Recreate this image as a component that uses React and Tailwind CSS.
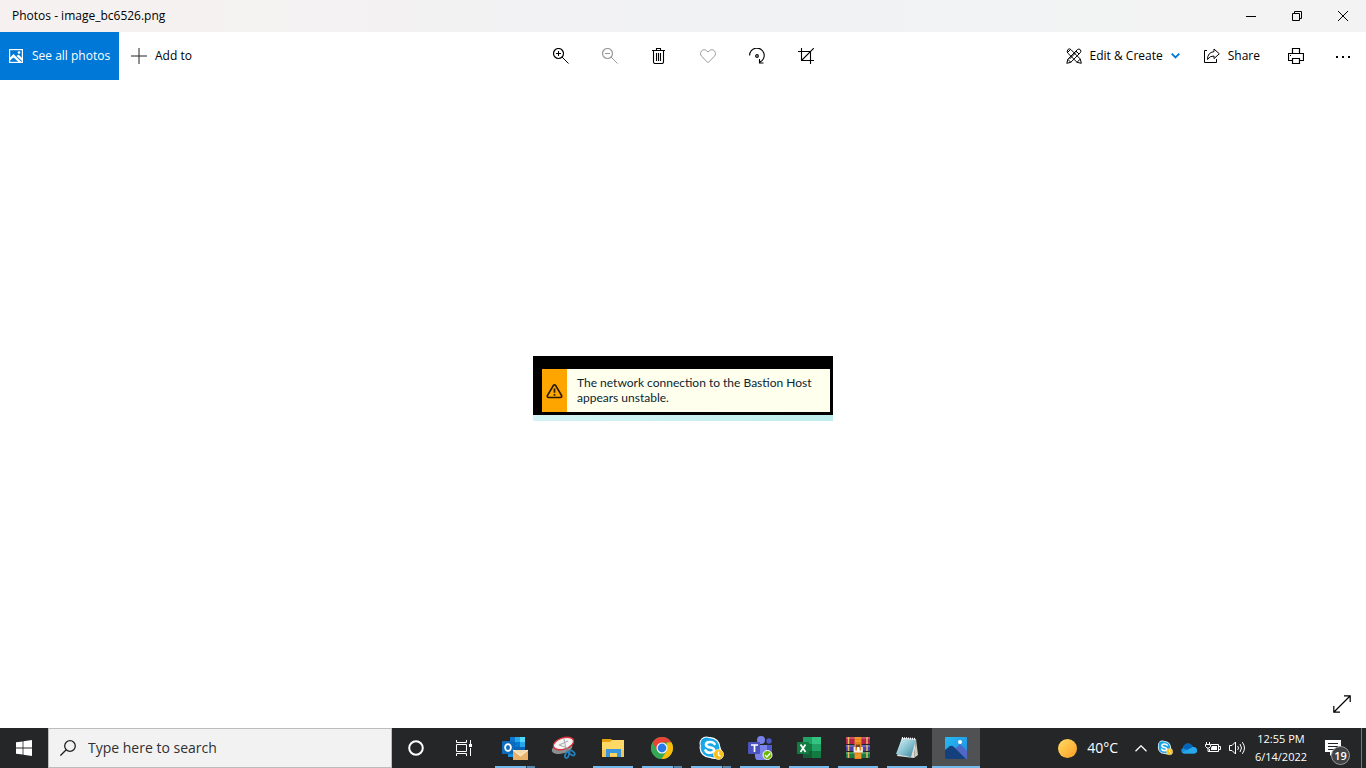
import React from "react";

function Icon({ w = 16, h = w, className = "", sw = 1, children }) {
  return (
    <svg
      width={w}
      height={h}
      viewBox={`0 0 ${w} ${h}`}
      fill="none"
      stroke="currentColor"
      strokeWidth={sw}
      aria-hidden="true"
      className={`shrink-0 ${className}`}
    >
      {children}
    </svg>
  );
}

/* ---------- Title bar ---------- */

function TitleBar() {
  const btn = "flex h-8 w-[46px] items-center justify-center";
  return (
    <header className="flex h-8 items-center justify-between bg-linear-to-r from-[#f6f1f0] via-[#f1f2f4] to-[#f3f3f3]">
      <h1 className="pl-3 text-[12px] leading-4">Photos - image_bc6526.png</h1>
      <div className="flex">
        <button aria-label="Minimize" className={btn}>
          <Icon w={10}><path d="M0 5.5h10" /></Icon>
        </button>
        <button aria-label="Restore" className={btn}>
          <Icon w={10}><path d="M.5 2.5h7v7h-7zM2.5 2.5v-2h7v7h-2" /></Icon>
        </button>
        <button aria-label="Close" className={btn}>
          <Icon w={10}><path d="M0 0l10 10M10 0L0 10" /></Icon>
        </button>
      </div>
    </header>
  );
}

/* ---------- Photo toolbar ---------- */

const tools = [
  {
    label: "Zoom in",
    art: <><circle cx="5.5" cy="5.5" r="5" strokeWidth="1.2" /><path d="M9 9l6.500 6.500M3 5.500h5M5.500 3v5" /></>,
  },
  {
    label: "Zoom out",
    faded: true,
    art: <><circle cx="5.5" cy="5.5" r="5" strokeWidth="1.2" /><path d="M9 9l6.500 6.500M3 5.500h5" /></>,
  },
  {
    label: "Delete",
    art: <path strokeWidth="1.1" d="M1 2.500h13M5.500 2.500v-2h4v2M2.500 2.500v11.500q0 1.500 1.500 1.500h7q1.500 0 1.500-1.500v-11.500M5.500 5v8M7.500 5v8M9.500 5v8" />,
  },
  {
    label: "Favorite",
    faded: true,
    art: <path d="M8 14.700L1.600 8.300C.2 6.800.2 4.400 1.600 2.900S5.300 1.400 6.700 2.800L8 4.100l1.300-1.300c1.400-1.400 3.700-1.400 5.100.1s1.400 3.900 0 5.400z" />,
  },
  {
    label: "Rotate",
    art: <><path strokeWidth="1.100" d="M.600 7.500A7.300 7.300 0 1 1 11 14M10.500 11v4h4" /><circle cx="8" cy="8" r="1.300" strokeWidth="1.200" /></>,
  },
  {
    label: "Crop",
    art: <path strokeWidth="1.100" d="M3.500 0v12.500H16M0 3.500h12.500V16M3.500 12.500L15.800.2" />,
  },
];

function Toolbar() {
  return (
    <div className="grid h-12 grid-cols-[1fr_auto_1fr] text-[12px] leading-4">
      <div className="flex">
        <button className="flex w-[119px] items-center gap-2 bg-[#0078d7] pl-2 whitespace-nowrap text-white">
          <Icon>
            <rect x="1.600" y="1.600" width="12.800" height="12.800" strokeWidth="1.200" />
            <path d="M2 9.500L5.500 6l8 8H10.500L5.500 9.500 2 12.500z" fill="currentColor" stroke="none" />
            <path d="M8.500 8l2-1.500 3.500 3.500v3z" fill="currentColor" stroke="none" />
            <circle cx="11" cy="4.500" r="1.300" fill="currentColor" stroke="none" />
          </Icon>
          See all photos
        </button>
        <button className="flex items-center gap-2 px-3 whitespace-nowrap">
          <Icon className="text-[#222]"><path d="M0 8h16M8 0v16" /></Icon>
          Add to
        </button>
      </div>
      <div className="flex gap-px">
        {tools.map((t) => (
          <button key={t.label} aria-label={t.label} disabled={t.label === "Zoom out"} className={`flex w-12 items-center justify-center ${t.faded ? "text-[#999]" : ""}`}>
            <Icon w={16}>{t.art}</Icon>
          </button>
        ))}
      </div>
      <div className="flex justify-end">
        <button className="flex items-center gap-2 px-3 whitespace-nowrap">
          <Icon>
            <path d="M2.200 1.200Q3.500.2 5 1.700l9.300 9.300 1 4.300-4.300-1L1.700 5Q.3 3.200 2.200 1.200zM11 14.300l3.300-3.300M1.500 4.500l3-3M.8 15.300l1-4L11.300 1.700Q13 .3 14.300 1.700t0 3L4.800 14.300zM1.800 11.300l3 3M10 3l3 3M3.500 11l6.500-6.500" />
          </Icon>
          Edit &amp; Create
          <Icon w={9} h={6} sw={1.800} className="text-[#0078d7]"><path d="M.7.7L4.500 4.500 8.300.7" /></Icon>
        </button>
        <button className="flex items-center gap-2 px-3 whitespace-nowrap">
          <Icon>
            <path d="M3 2.500H.5v12h12V11" />
            <path d="M10 1l5.300 4.800L10 10.600V8Q6 7.600 3.500 11.500 3.500 4.500 10 3.600z" />
          </Icon>
          Share
        </button>
        <button aria-label="Print" className="flex w-12 items-center justify-center">
          <Icon>
            <path strokeWidth="1.200" d="M4.500 5.500v-5h7v5M4.500 12.500h-4v-7h15v7h-4M4.500 10.500h7v5h-7z" />
            <path d="M2 7.500h1" />
          </Icon>
        </button>
        <button aria-label="See more" className="flex w-[46px] items-center justify-center">
          <Icon w={14} h={16}><path strokeWidth="2" d="M0 9h2M6 9h2M12 9h2" /></Icon>
        </button>
      </div>
    </div>
  );
}

/* ---------- Viewed picture ---------- */

function Viewer() {
  return (
    <main className="relative flex flex-1 items-center justify-center pb-[31px]">
      <figure className="w-[300px]">
        <div className="bg-black pt-[13px] pr-[3px] pb-[3px] pl-[9px]">
          <div className="flex h-[43px] bg-[#ffffee]">
            <div className="flex w-[25px] items-center justify-center bg-[#ffa500] text-[#2a1a00]">
              <Icon w={17} h={16} sw={1.700}>
                <path strokeLinejoin="round" d="M7.300 2.600Q8.500 1 9.700 2.600l5.800 9.800q.8 2-1.200 2.100H2.700q-2-.1-1.200-2.100z" />
                <path d="M8.500 5.500v4.300M8.500 11v1.700" />
              </Icon>
            </div>
            <p className="flex-1 pt-[6px] pl-[10px] font-[Lato,sans-serif] text-[12px] leading-[15px] text-[#0a2530]">
              The network connection to the Bastion Host appears unstable.
            </p>
          </div>
        </div>
        <div className="h-[6px] bg-linear-to-r from-[#d3f3f4] to-[#bdeeed]" />
      </figure>
      <button aria-label="Full screen" className="absolute right-0 bottom-0 flex size-12 items-center justify-center">
        <Icon w={18} sw={1.200}><path d="M1 17L17 1M11 .8h6.200V7M.8 11v6.200H7" /></Icon>
      </button>
    </main>
  );
}

/* ---------- Taskbar application icons ---------- */

function App24({ children }) {
  return (
    <svg width="26" height="24" viewBox="0 0 26 24" aria-hidden="true" className="shrink-0">
      {children}
    </svg>
  );
}

const Outlook = (
  <App24>
    <path d="M8 1h15v13H8z" fill="#0a63b5" />
    <path d="M8 1h5v5H8z" fill="#0f78d0" />
    <path d="M13 1h5v5h-5z" fill="#28a8ea" />
    <path d="M18 1h5v5h-5z" fill="#50d9ff" />
    <path d="M13 6h5v5h-5z" fill="#0078d4" />
    <path d="M18 6h5v5h-5z" fill="#28a8ea" />
    <path d="M6 14h16v7H6z" fill="#1490df" />
    <rect y="5" width="12" height="13" rx="1" fill="#0f6cbd" />
    <ellipse cx="6" cy="11.500" rx="2.900" ry="3.400" fill="none" stroke="#fff" strokeWidth="1.800" />
    <path d="M11 14h15v10H11z" fill="#e9b268" />
    <path d="M11 14l7.500 6 7.500-6" fill="#f6d9ac" stroke="#fff3df" />
  </App24>
);

const Snip = (
  <App24>
    <ellipse cx="11" cy="12.500" rx="10.500" ry="5" transform="rotate(-14 11 12.500)" fill="#8c8f91" />
    <ellipse cx="12.500" cy="7.500" rx="10.500" ry="5.600" transform="rotate(-18 12.500 7.500)" fill="#f5f5f5" stroke="#d9343c" strokeWidth="1.400" />
    <path d="M13 3l2 10M8 9l9 3M17 5l-9 4" stroke="#aab0b3" strokeWidth="1.100" fill="none" />
    <path d="M14 12l4 3" stroke="#737a7e" fill="none" />
    <g fill="none" stroke="#2483bf" strokeWidth="1.700">
      <ellipse cx="16" cy="19" rx="1.800" ry="3.200" transform="rotate(20 16 19)" />
      <ellipse cx="21" cy="17" rx="1.800" ry="3.200" transform="rotate(-50 21 17)" />
    </g>
  </App24>
);

const Explorer = (
  <App24>
    <path d="M2 3h9l2 2h11v16H2z" fill="#e6a20e" />
    <path d="M2 6h8l2-2h12v17H2z" fill="#ffd866" />
    <path d="M2 14h22v7H2z" fill="#f7c64e" />
    <path d="M6 13h15v8h-4v-4h-7v4H6z" fill="#3a96dd" />
    <path d="M10 17h7v3h-7z" fill="#fbd55f" />
  </App24>
);

const Chrome = (
  <App24>
    <circle cx="13" cy="12" r="11" fill="#34a853" />
    <path d="M3.500 6.500a11 11 0 0 1 19 0H13L8.200 14.800z" fill="#ea4335" />
    <path d="M22.500 6.500A11 11 0 0 1 12.500 23l5.300-8.200V6.500z" fill="#fbbc05" />
    <path d="M3.500 6.500L8.200 14.800 13 17.500l-1 5.500A11 11 0 0 1 3.500 6.500z" fill="#34a853" />
    <circle cx="13" cy="12" r="5.500" fill="#fff" />
    <circle cx="13" cy="12" r="4.400" fill="#287ae6" />
  </App24>
);

function SkypeMark() {
  return (
    <>
      <circle cx="8.500" cy="7.500" r="7" fill="#fff" />
      <circle cx="16" cy="15.500" r="7.500" fill="#fff" />
      <circle cx="12" cy="11.500" r="10.500" fill="#fff" />
      <circle cx="8.500" cy="7.500" r="6" fill="#14a3e5" />
      <circle cx="16" cy="15.500" r="6" fill="#138dd8" />
      <circle cx="12" cy="11.500" r="9.300" fill="#19a8e9" />
      <path d="M16.500 8C15 5.200 8 5.200 8 8.700c0 3.900 8.200 1.900 8.200 5.400 0 3.400-7.400 3.400-8.700.3" fill="none" stroke="#fff" strokeWidth="2.600" strokeLinecap="round" />
      <circle cx="20.500" cy="18.500" r="5" fill="#fcbf16" stroke="#fff3c0" strokeWidth=".8" />
      <path d="M20.500 15.500v3.500l2 1.500" fill="none" stroke="#fff" strokeWidth="1.400" />
    </>
  );
}

const Teams = (
  <App24>
    <circle cx="14" cy="4" r="4" fill="#7b83eb" />
    <circle cx="22" cy="5" r="2.700" fill="#5059c9" />
    <path d="M17 9h8v8a5 5 0 0 1-8 4z" fill="#5059c9" />
    <path d="M8 9h12v9a6 6 0 0 1-12 3z" fill="#7b83eb" />
    <rect x="1" y="6" width="12" height="12" rx="1" fill="#4b53bc" />
    <path d="M4 9h7M7.500 9v7" stroke="#fff" strokeWidth="1.700" />
    <circle cx="20.500" cy="19" r="4.500" fill="#6bb700" stroke="#fff" />
    <path d="M18 19l1.900 1.900 3.400-3.600" fill="none" stroke="#fff" strokeWidth="1.400" />
  </App24>
);

const Excel = (
  <App24>
    <path d="M7 1h9v7H7z" fill="#21a366" />
    <path d="M16 1h9v7h-9z" fill="#33c481" />
    <path d="M7 8h9v7H7z" fill="#107c41" />
    <path d="M16 8h9v7h-9z" fill="#21a366" />
    <path d="M7 15h18v7H7z" fill="#185c37" />
    <path d="M16 15h9v7h-9z" fill="#107c41" />
    <rect x="1" y="6" width="12" height="12" rx="1" fill="#107c41" />
    <path d="M4.500 8.500l5 7.500M9.500 8.500l-5 7.500" stroke="#fff" strokeWidth="1.700" />
  </App24>
);

const WinRar = (
  <App24>
    <rect x="1" y="1" width="24" height="7" fill="#b3224c" />
    <path d="M1 2h24" stroke="#ed7891" />
    <rect x="1" y="9" width="24" height="6" fill="#4941a9" />
    <path d="M1 10h24" stroke="#9187df" />
    <rect x="1" y="16" width="24" height="6" fill="#177b45" />
    <path d="M1 17h24" stroke="#67bd7d" />
    <path d="M3.500 1v7M3.500 9v6M3.500 16v6M22 1v7M22 9v6M22 16v6" stroke="#e6bd62" strokeWidth="1.500" />
    <path d="M9.500 1h7v22h-7z" fill="#e58419" />
    <path d="M10 2h6M10 5h6M10 19h6M10 21h6" stroke="#f9a93f" />
    <path d="M9.500 11v4.500h7.500V11" fill="none" stroke="#f3ecd9" strokeWidth="1.800" />
    <path d="M11 8.500h4v3h-4z" fill="#7b461e" />
    <path d="M12 11h2.500v4H12z" fill="#fff" />
  </App24>
);

const Notepad = (
  <App24>
    <defs>
      <linearGradient id="pad" x1="0" y1="0" x2="1" y2="1">
        <stop stopColor="#e2f6fa" />
        <stop offset=".55" stopColor="#82bfce" />
        <stop offset="1" stopColor="#377e94" />
      </linearGradient>
    </defs>
    <path d="M8 2l14 1-2 19L3 20z" fill="#d9dddc" />
    <path d="M22 3l2 16-4 3z" fill="#cfc9ba" />
    <path d="M8 2l14 1-5 18L2 18z" fill="url(#pad)" />
    <path d="M8 2l14 1" stroke="#fff" strokeWidth="2" strokeDasharray="1 1" />
  </App24>
);

const Photos = (
  <App24>
    <defs>
      <linearGradient id="sky" x1="0" y1="0" x2="1" y2="1">
        <stop stopColor="#25b9f1" />
        <stop offset="1" stopColor="#238be1" />
      </linearGradient>
      <clipPath id="frame"><rect x="2" y="1" width="22" height="22" rx="1" /></clipPath>
    </defs>
    <g clipPath="url(#frame)">
      <rect x="2" y="1" width="22" height="22" fill="url(#sky)" />
      <path d="M12 13l5-5 9 9v7H12z" fill="#5068c5" />
      <path d="M2 14l5-4q2-1 4 1l13 13H2z" fill="#15407e" />
    </g>
    <circle cx="17" cy="6" r="2" fill="#fff" />
  </App24>
);

const apps = [
  { name: "Outlook", art: Outlook, stacked: true },
  { name: "Snipping Tool", art: Snip, idle: true },
  { name: "File Explorer", art: Explorer },
  { name: "Google Chrome", art: Chrome, stacked: true },
  { name: "Skype for Business", art: <App24><SkypeMark /></App24>, stacked: true },
  { name: "Microsoft Teams", art: Teams },
  { name: "Excel", art: Excel },
  { name: "WinRAR", art: WinRar },
  { name: "Notepad", art: Notepad },
  { name: "Photos", art: Photos, active: true },
];

function AppButton({ app }) {
  return (
    <button aria-label={app.name} className={`flex w-12 flex-col items-center ${app.active ? "bg-[#505152]" : ""}`}>
      <span className="flex flex-1 items-center pt-0.5">{app.art}</span>
      {app.idle ? (
        <span className="h-0.5" />
      ) : (
        <span className={`flex h-0.5 justify-end bg-[#76b9ed] ${app.active ? "w-12" : "w-10"}`}>
          {app.stacked && <span className="h-0.5 w-[9px] border-l border-[#2c4352] bg-[#5687ac]" />}
        </span>
      )}
    </button>
  );
}

/* ---------- Taskbar ---------- */

function Tray() {
  const item = "flex w-6 items-center justify-center";
  return (
    <div className="flex text-white">
      <button className="flex items-center gap-[10px] pr-[11px] text-[14px] leading-5">
        <span className="size-[19px] rounded-full bg-linear-to-br from-[#ffdc62] to-[#ff9d1c]" />
        40°C
      </button>
      <button aria-label="Show hidden icons" className={item}>
        <Icon w={12} h={7} sw={1.300}><path d="M.5 6.300L6 .8l5.500 5.500" /></Icon>
      </button>
      <button aria-label="Skype" className={item}>
        <svg width="16" height="16" viewBox="0 0 26 25" aria-hidden="true"><SkypeMark /></svg>
      </button>
      <button aria-label="OneDrive" className={item}>
        <svg width="16" height="11" viewBox="0 0 16 11" aria-hidden="true">
          <path d="M2 5Q3 .5 7 .5q3.500 0 5 3.500 3.500 0 4 3.300 0 3.200-3.200 3.200H3.500Q.3 10.300.2 7.600.3 5.500 2 5z" fill="#1490df" />
          <path d="M2 5Q3 .5 7 .5q3.500 0 5 3.500L6 7z" fill="#0364b8" />
          <path d="M1 9.500L12 4q3.500 0 4 3.300 0 3.200-3.200 3.200H3.500Q2 10.500 1 9.500z" fill="#28a8ea" />
        </svg>
      </button>
      <button aria-label="Battery charging" className={item}>
        <Icon w={16} h={12}>
          <path d="M6 2.500h7.500v7h-9V7M13.500 4.500h2v3h-2M1.500 0v2M4.500 0v2M.5 2.500h5v2l-1.500 1.500H2L.5 4.500zM3 6v3.500h2" />
          <path d="M7 4h5v4H6V6z" fill="currentColor" stroke="none" />
        </Icon>
      </button>
      <button aria-label="Volume" className={item}>
        <Icon w={17} h={14}>
          <path d="M.5 4.500H3L6.500 1v12L3 9.500H.5zM8.700 5q1.600 2 0 4M11 3q3 4 0 8M13.300 1.200q4.400 5.800 0 11.600" />
        </Icon>
      </button>
      <button className="ml-1 flex w-14 flex-col items-center justify-center text-[11px] leading-[18px] whitespace-nowrap">
        <time>12:55 PM</time>
        <time>6/14/2022</time>
      </button>
      <button aria-label="19 new notifications" className="relative flex w-12 items-center justify-center">
        <Icon w={16} h={16}>
          <path d="M0 0h16v12H9l-4 4v-4H0z" fill="#fff" stroke="none" />
          <path d="M3 3.500h10M3 6.500h10M3 9.500h7" stroke="#222" />
        </Icon>
        <span className="absolute top-[18px] left-[22px] flex size-[19px] items-center justify-center rounded-full border border-[#999] bg-[#414345] text-[11px] leading-4 font-semibold">19</span>
      </button>
      <button aria-label="Show desktop" className="ml-1 w-[5px] border-l border-[#777]" />
    </div>
  );
}

function Taskbar() {
  return (
    <footer className="flex h-10 justify-between bg-[#242628]">
      <div className="flex">
        <button aria-label="Start" className="flex w-12 items-center justify-center text-white">
          <Icon>
            <path fill="currentColor" stroke="none" d="M0 2.300L6.600 1.400v6.100H0zM7.400 1.300L16 0v7.500H7.400zM0 8.400h6.600v6.200L0 13.700zM7.400 8.400H16V16l-8.600-1.200z" />
          </Icon>
        </button>
        <label className="flex w-[344px] items-center gap-3 border border-[#bcbcbc] bg-[#f2f2f2] pl-[11px] text-[#222]">
          <Icon w={16} sw={1.300}><circle cx="10" cy="6" r="5.300" /><path d="M6.200 9.800L.4 15.600" /></Icon>
          <input aria-label="Search" placeholder="Type here to search" className="min-w-0 flex-1 bg-transparent text-[14px] leading-5 outline-none placeholder:text-[#303030]" />
        </label>
        <button aria-label="Cortana" className="flex w-12 items-center justify-center text-white">
          <Icon w={16} sw={2}><circle cx="8" cy="8" r="6.800" /></Icon>
        </button>
        <button aria-label="Task View" className="flex w-12 items-center justify-center text-white">
          <Icon w={16} h={16}>
            <path d="M.5 0v2.500h10V0M.5 16v-2.500h10V16M.5 4.500h10v7h-10zM14.500 0v4M14.500 8v8" />
            <path d="M13 4h3v3h-3z" fill="currentColor" stroke="none" />
          </Icon>
        </button>
        <div className="flex gap-px pl-[3px]">
          {apps.map((a) => <AppButton key={a.name} app={a} />)}
        </div>
      </div>
      <Tray />
    </footer>
  );
}

export default function App() {
  return (
    <div className="flex min-h-screen flex-col bg-white font-['Open_Sans','Noto_Sans',sans-serif] text-black">
      <TitleBar />
      <Toolbar />
      <Viewer />
      <Taskbar />
    </div>
  );
}
